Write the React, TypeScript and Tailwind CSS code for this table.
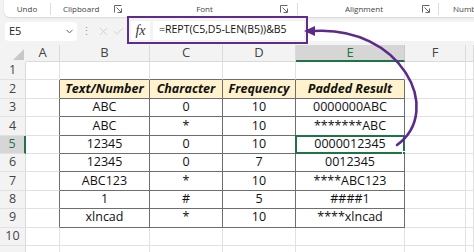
import { ChevronDown, X, Check } from "lucide-react";

const cols = [
  { key: "hdr", w: "w-[26px]", label: "" },
  { key: "A", w: "w-[34px]", label: "A" },
  { key: "B", w: "w-[90px]", label: "B" },
  { key: "C", w: "w-[73px]", label: "C" },
  { key: "D", w: "w-[73px]", label: "D" },
  { key: "E", w: "w-[109px]", label: "E" },
  { key: "F", w: "w-[61px]", label: "F" },
  { key: "G", w: "flex-1", label: "" },
];

// B..E, rows 2..9
const data: Record<number, string[]> = {
  2: ["Text/Number", "Character", "Frequency", "Padded Result"],
  3: ["ABC", "0", "10", "0000000ABC"],
  4: ["ABC", "*", "10", "*******ABC"],
  5: ["12345", "0", "10", "0000012345"],
  6: ["12345", "0", "7", "0012345"],
  7: ["ABC123", "*", "10", "****ABC123"],
  8: ["1", "#", "5", "####1"],
  9: ["xlncad", "*", "10", "****xlncad"],
};

const rows = [1, 2, 3, 4, 5, 6, 7, 8, 9, 10, 11];

function Launcher() {
  return (
    <svg width="8" height="8" viewBox="0 0 8 8" className="text-[#666]">
      <path d="M0.5 0.5 H7.5 M0.5 0.5 V7.5 M7.5 7.5 H3.5 M7.5 7.5 V3.5 M2.5 2.5 L7 7" stroke="currentColor" strokeWidth="1" fill="none" />
    </svg>
  );
}

function Cell({ r, ci }: { r: number; ci: number }) {
  const inTableCol = ci >= 2 && ci <= 5;
  const inTableRow = r >= 2 && r <= 9;
  const darkRight = (ci >= 1 && ci <= 5) && inTableRow;
  const darkBottom = inTableCol && r >= 1 && r <= 9;
  const isHead = r === 2 && inTableCol;
  const text = inTableRow && inTableCol ? data[r][ci - 2] : "";
  const selected = r === 5 && ci === 5;
  return (
    <div
      className={`relative h-full shrink-0 ${cols[ci].w} flex items-center justify-center border-r border-b ${
        darkRight ? "border-r-[#6e6e6e]" : "border-r-[#e1e1e1]"
      } ${darkBottom ? "border-b-[#6e6e6e]" : "border-b-[#e1e1e1]"} ${
        isHead ? "bg-[#fff2cc] font-bold italic" : "bg-white"
      } text-[12.5px] text-[#111]`}
    >
      {text}
      {selected && (
        <div className="absolute -left-px -top-px -right-px -bottom-px border-2 border-[#217346]">
          <div className="absolute -right-[4px] -bottom-[4px] w-[5px] h-[5px] bg-[#217346] border border-white" />
        </div>
      )}
    </div>
  );
}

export default function App() {
  return (
    <div className="relative w-[474px] h-[252px] overflow-hidden bg-[#f3f3f3] font-['Open_Sans',sans-serif]">
      {/* Ribbon labels */}
      <div className="h-[17px] ml-[4px] bg-white rounded-bl-md shadow-[0_1px_2px_rgba(0,0,0,0.12)] flex items-center text-[8px] text-[#444] overflow-hidden whitespace-nowrap">
        <div className="w-[46px] shrink-0 text-center">Undo</div>
        <div className="w-px h-[12px] shrink-0 bg-[#ddd]" />
        <div className="w-[74px] shrink-0 flex items-center pl-[12px] gap-[15px]">
          <span>Clipboard</span>
          <Launcher />
        </div>
        <div className="w-[172px] shrink-0 flex items-center">
          <span className="flex-1 text-center pl-[4px]">Font</span>
          <span className="mr-[9px]"><Launcher /></span>
        </div>
        <div className="w-px h-[12px] shrink-0 bg-[#ddd]" />
        <div className="w-[140px] shrink-0 flex items-center">
          <span className="flex-1 text-center pl-[8px]">Alignment</span>
          <span className="mr-[8px]"><Launcher /></span>
        </div>
        <div className="w-px h-[12px] shrink-0 bg-[#ddd]" />
        <span className="pl-[14px] shrink-0">Number</span>
      </div>

      {/* Formula bar */}
      <div className="h-[28px] flex items-center pl-[5px]">
        <div className="w-[72px] h-[19px] bg-white rounded-sm flex items-center justify-between pl-[4px] pr-[2px] text-[11px] text-[#222]">
          <span>E5</span>
          <ChevronDown size={11} className="text-[#555]" />
        </div>
        <span className="w-[18px] text-center text-[#999] text-[11px]">⋮</span>
        <X size={13} strokeWidth={1.3} className="text-[#c4c4c4] ml-[2px]" />
        <Check size={13} strokeWidth={1.3} className="text-[#c4c4c4] ml-[2px]" />
        <div className="ml-[2px] -mt-[2px] w-[181px] h-[28px] border-2 border-[#5e2d8c] flex items-center gap-[3px] px-[2px] bg-[#f3f3f3]">
          <div className="w-[19px] h-[19px] bg-white flex items-center justify-center italic font-['Liberation_Serif',serif] text-[14px] text-[#333]">
            fx
          </div>
          <div className="flex-1 h-[19px] bg-white flex items-center pl-[6px] text-[10.5px] text-[#111] whitespace-nowrap overflow-hidden">
            =REPT(C5,D5-LEN(B5))&amp;B5
          </div>
        </div>
        <div className="flex-1 h-[19px] bg-white" />
      </div>

      {/* Column headers */}
      <div className="h-[17px] flex">
        {cols.map((c, i) => (
          <div
            key={c.key}
            className={`h-full shrink-0 ${c.w} flex items-center justify-center text-[13px] ${
              i === 0
                ? "bg-[#f3f3f3] relative"
                : c.key === "E"
                ? "bg-[#d6d6d6] text-[#217346] border-b-2 border-b-[#217346] border-r border-r-[#c8c8c8]"
                : "bg-[#f3f3f3] text-[#444] border-r border-r-[#dadada] border-b border-b-[#dadada]"
            }`}
          >
            {i === 0 ? (
              <svg width="26" height="17" viewBox="0 0 26 17" className="absolute inset-0">
                <polygon points="24,4 24,15 13,15" fill="#c8c8c8" />
              </svg>
            ) : (
              c.label
            )}
          </div>
        ))}
      </div>

      {/* Grid */}
      <div className="flex flex-col">
        {rows.map((r) => (
          <div key={r} className="h-[18.4px] flex">
            <div
              className={`w-[26px] shrink-0 h-full flex items-center justify-center text-[12.5px] border-b border-b-[#e1e1e1] ${
                r === 5
                  ? "bg-[#d6d6d6] text-[#217346] border-r-2 border-r-[#217346]"
                  : "bg-[#f3f3f3] text-[#444] border-r border-r-[#dadada]"
              }`}
            >
              {r <= 10 ? r : ""}
            </div>
            {cols.slice(1).map((c, i) => (
              <Cell key={c.key} r={r} ci={i + 1} />
            ))}
          </div>
        ))}
      </div>

      {/* Arrow from result cell back to formula */}
      <svg
        width="474"
        height="252"
        viewBox="0 0 474 252"
        className="absolute left-0 top-0 pointer-events-none"
      >
        <path d="M397 145 C445 110 400 25 313 31" stroke="#5b2a8a" strokeWidth="2.6" fill="none" strokeLinecap="round" />
        <polygon points="304,31 315,26 315,36" fill="#5b2a8a" />
      </svg>
    </div>
  );
}
